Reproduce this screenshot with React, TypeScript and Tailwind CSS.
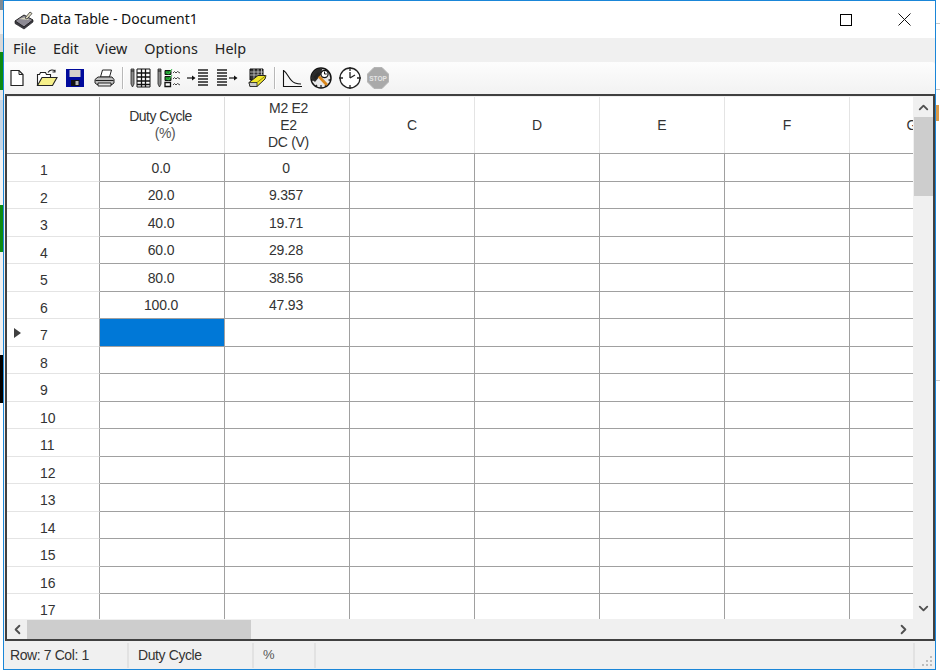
import { ChevronDown, ChevronLeft, ChevronRight, ChevronUp } from "lucide-react";

const COLS = ["C", "D", "E", "F", "G"];
const DATA = [
  ["0.0", "0"],
  ["20.0", "9.357"],
  ["40.0", "19.71"],
  ["60.0", "29.28"],
  ["80.0", "38.56"],
  ["100.0", "47.93"],
];
const ROWS = Array.from({ length: 17 }, (_, i) => i + 1);

const LEFT_STRIP = [
  ["h-[10px]", "bg-[#7f8a94]"],
  ["h-[24px]", "bg-[#f2f2f2]"],
  ["h-[18px]", "bg-[#d8d8d8]"],
  ["h-[38px]", "bg-[#0b8a12]"],
  ["h-[10px]", "bg-[#e8e8e8]"],
  ["h-[50px]", "bg-[#c6d6e6]"],
  ["h-[55px]", "bg-[#f4f4f4]"],
  ["h-[47px]", "bg-[#0b8a12]"],
  ["h-[103px]", "bg-[#f0f0f0]"],
  ["h-[48px]", "bg-[#000000]"],
  ["h-[268px]", "bg-[#ffffff]"],
];

function NewIcon() {
  return (
    <svg width="16" height="18" viewBox="0 0 16 18" className="shrink-0">
      <path d="M2 1.500h8l4 4v11H2z" fill="#fff" stroke="#222" strokeWidth="1.200" />
      <path d="M10 1.500v4h4" fill="none" stroke="#222" />
    </svg>
  );
}

function OpenIcon() {
  return (
    <svg width="22" height="18" viewBox="0 0 22 18" className="shrink-0">
      <path d="M1.500 16.500V5.500h2l1-2h5l1 2h4v3" fill="#fff" stroke="#222" strokeWidth="1.100" />
      <path d="M1.500 16.500l4.500-8h15l-4.500 8z" fill="#f6f08a" stroke="#222" strokeWidth="1.100" />
      <path d="M12 3.500c2-3 5-3 7-1.500M19 .8v2.200h-2.500" fill="none" stroke="#222" strokeWidth="1.100" />
    </svg>
  );
}

function SaveIcon() {
  return (
    <svg width="18" height="18" viewBox="0 0 18 18" className="shrink-0">
      <path d="M0 0h18v18H0z" fill="#000a9c" />
      <path d="M3.500 1h11v7h-11z" fill="#d6d2cc" />
      <path d="M5 11h8.500v6H5z" fill="#111" />
      <path d="M9.500 12h3v4h-3z" fill="#b5b5b5" />
    </svg>
  );
}

function PrintIcon() {
  return (
    <svg width="21" height="18" viewBox="0 0 21 18" className="shrink-0">
      <path d="M6.500 8 8.500 1h9l-2 7z" fill="#fff" stroke="#222" />
      <path d="M1 10.500 4 8h14l2 2.500v3.500l-2 1.500H3L1 14z" fill="#bdbdbd" stroke="#222" />
      <path d="M1.500 11.500h18" stroke="#222" />
      <path d="M4 14h13v3H4z" fill="#e4e4e4" stroke="#222" />
    </svg>
  );
}

function Sep() {
  return <div className="h-[22px] w-[2px] shrink-0 border-l border-[#b8b8b8] bg-white" />;
}

function PencilMark() {
  return (
    <>
      <path d="M1 1h3v15l-1.500 3L1 16z" fill="#8c8c8c" stroke="#222" strokeWidth=".8" />
      <path d="M1 3h3" stroke="#222" />
    </>
  );
}

function GridIcon() {
  return (
    <svg width="21" height="20" viewBox="0 0 21 20" className="shrink-0">
      <PencilMark />
      <path d="M7 1h13v18H7z" fill="#fff" stroke="#111" />
      <path d="M7 5h13M7 9h13M7 13h13M7 16.500h13M11.500 1v18M15.500 1v18" stroke="#111" strokeWidth="1.300" />
    </svg>
  );
}

function ChecklistIcon() {
  return (
    <svg width="24" height="20" viewBox="0 0 24 20" className="shrink-0">
      <PencilMark />
      <path d="M8 2.500h6v4H8z" fill="#1c8a2b" stroke="#111" />
      <path d="M8 8.500h6v4H8z" fill="#1c8a2b" stroke="#111" />
      <path d="M8 14.500h5.500v4H8z" fill="#fff" stroke="#111" strokeWidth="1.300" />
      <path d="M9.500 4.500l2 1.500 3.500-5M9.500 10.500l2 1.500 3.500-5" fill="none" stroke="#37c24b" />
      <path d="M16 5l1.500-1.500L19 5l1.500-1.500L23 5M16 11l1.500-1.500L19 11l1.500-1.500L23 11M16 17l1.500-1.500L19 17l1.500-1.500L23 17" fill="none" stroke="#444" />
    </svg>
  );
}

function ListInIcon() {
  return (
    <svg width="22" height="20" viewBox="0 0 22 20" className="shrink-0">
      <path d="M0 10h6" stroke="#111" strokeWidth="1.200" />
      <path d="M5 7.500 8.500 10 5 12.500z" fill="#111" />
      <path d="M11 2h10M11 5h10M11 8h10M11 11h10M11 14h10M11 17h10" stroke="#222" strokeWidth="1.700" />
    </svg>
  );
}

function ListOutIcon() {
  return (
    <svg width="22" height="20" viewBox="0 0 22 20" className="shrink-0">
      <path d="M1 2h10M1 5h10M1 8h10M1 11h10M1 14h10M1 17h10" stroke="#222" strokeWidth="1.700" />
      <path d="M13 10h6" stroke="#111" strokeWidth="1.200" />
      <path d="M18 7.500 21.500 10 18 12.500z" fill="#111" />
    </svg>
  );
}

function EraserIcon() {
  return (
    <svg width="19" height="20" viewBox="0 0 19 20" className="shrink-0">
      <path d="M2 1h13v11H2z" fill="#333" stroke="#111" />
      <path d="M2 4h13M2 7h13M6 1v11M10 1v9M13.500 1v6" stroke="#ddd" strokeWidth=".7" />
      <path d="M1 14.500 10 7.500h8l-1 3.500-8 7.500H2z" fill="#f3e92a" stroke="#222" />
      <path d="M1 14.500h8v4H2z" fill="#c9c9c9" stroke="#222" strokeWidth=".8" />
      <path d="M9 14.500 18 7.500" stroke="#8a7f10" />
    </svg>
  );
}

function CurveIcon() {
  return (
    <svg width="20" height="19" viewBox="0 0 20 19" className="shrink-0">
      <path d="M1.500 1v16.500H20" fill="none" stroke="#111" strokeWidth="1.100" />
      <path d="M1.500 1.500C6 4 7 12 13 14c2 .7 4 1 6 1" fill="none" stroke="#111" strokeWidth="1.100" />
    </svg>
  );
}

function ToolClockIcon() {
  return (
    <svg width="22" height="22" viewBox="0 0 22 22" className="shrink-0">
      <circle cx="11" cy="11" r="10" fill="#e8e8e8" stroke="#111" strokeWidth="1.500" />
      <path d="M1.500 12V9a9.500 9.500 0 0 1 11-7.500L10 9l-5 6z" fill="#2a2a2a" />
      <path d="M1.500 13h2M18.500 13h2M11 18v3M6 19l1-1M16 19l-1-1" stroke="#222" strokeWidth="1.300" />
      <path d="M8 8.500 17 18" stroke="#d9861c" strokeWidth="2.800" />
      <path d="M3.500 10 8 5l3 2.500-5.500 5z" fill="#222" />
      <circle cx="14.500" cy="7" r="3.600" fill="#fff" stroke="#111" strokeWidth="1.200" />
      <path d="M14.500 4.500V7h2.200" fill="none" stroke="#111" />
    </svg>
  );
}

function ClockIcon() {
  return (
    <svg width="22" height="22" viewBox="0 0 22 22" className="shrink-0">
      <circle cx="11" cy="11" r="10" fill="#fff" stroke="#222" strokeWidth="1.300" />
      <path d="M11 0v4M11 18v4M0 11h4M18 11h4M11 11V5M11 11l5-3" stroke="#222" strokeWidth="1.300" />
    </svg>
  );
}

function StopIcon() {
  return (
    <svg width="22" height="22" viewBox="0 0 22 22" className="shrink-0">
      <path d="M7 .5h8L21.500 7v8L15 21.500H7L.5 15V7z" fill="#a9a9a9" stroke="#b5b5b5" />
      <text x="11" y="13.500" textAnchor="middle" fontSize="6.500" fontWeight="700" fill="#e4e4e4" fontFamily="Liberation Sans, sans-serif">STOP</text>
    </svg>
  );
}

function AppIcon() {
  return (
    <svg width="20" height="20" viewBox="0 0 20 20" className="shrink-0">
      <path d="M1 11 10 5l9 5-9 7z" fill="#8d8a94" stroke="#222" />
      <path d="M1 11v2.500l9 5.500 9-7v-2l-9 7z" fill="#3c3a44" stroke="#222" strokeWidth=".7" />
      <path d="M5 9l7-2 3 3" fill="#d8d6c0" />
      <path d="M11 8 16 2l2 1.500-5 5.500z" fill="#e4dfc4" stroke="#333" strokeWidth=".8" />
    </svg>
  );
}

function TableGrid() {
  return (
    <div className="min-h-0 flex-1 overflow-hidden bg-white text-[14px] leading-[16px] text-[#333]">
      <div className="flex h-[57px] w-[1000px] border-b border-[#a0a0a0]">
        <div className="w-[93px] shrink-0 border-r border-[#a0a0a0]" />
        <div className="flex w-[125px] shrink-0 flex-col items-center border-r border-[#dcdcdc] pt-[11px] pr-[3px] leading-[17px] tracking-[-0.5px]">
          <span>Duty Cycle</span>
          <span className="pl-[9px] text-[#555]">(%)</span>
        </div>
        <div className="flex w-[125px] shrink-0 flex-col items-center border-r border-[#dcdcdc] pt-[3px] pl-[3px] leading-[17px] tracking-[-0.3px]">
          <span>M2 E2</span>
          <span>E2</span>
          <span>DC (V)</span>
        </div>
        {COLS.map((c) => (
          <div key={c} className="flex w-[125px] shrink-0 items-center justify-center border-r border-[#e4e4e4]">
            {c}
          </div>
        ))}
      </div>
      {ROWS.map((r, i) => (
        <div key={r} className="flex h-[27.5px] w-[1000px]">
          <div className="relative w-[93px] shrink-0 border-r border-b border-r-[#a0a0a0] border-b-[#e4e4e4] pt-[8px] pl-[33px] text-left">
            {r === 7 && (
              <span className="absolute left-[7px] top-[9px] h-0 w-0 border-y-[5.5px] border-l-[7px] border-y-transparent border-l-[#404040]" />
            )}
            {r}
          </div>
          <div className={`w-[125px] shrink-0 border-r border-b border-[#a0a0a0] pt-[5.5px] pr-[2px] text-center tracking-[-0.2px] ${r === 7 ? "bg-[#0078d7]" : ""}`}>
            {DATA[i]?.[0]}
          </div>
          <div className="w-[125px] shrink-0 border-r border-b border-[#a0a0a0] pt-[5.5px] pr-[2px] text-center tracking-[-0.2px]">
            {DATA[i]?.[1]}
          </div>
          {COLS.map((c) => (
            <div key={c} className="w-[125px] shrink-0 border-r border-b border-[#a0a0a0]" />
          ))}
        </div>
      ))}
    </div>
  );
}

export default function App() {
  return (
    <div className="flex h-[671px] w-[940px] overflow-hidden bg-white font-['Liberation_Sans',sans-serif]">
      <div className="flex w-[3px] shrink-0 flex-col">
        {LEFT_STRIP.map(([h, bg], i) => (
          <div key={i} className={`${h} ${bg}`} />
        ))}
      </div>

      <div className="flex h-[670px] w-[933px] shrink-0 flex-col border border-[#1a86d8] bg-[#f0f0f0]">
        <div className="flex h-[37px] shrink-0 items-center bg-white pl-[10px]">
          <AppIcon />
          <span className="ml-[6px] pb-[2px] font-['Noto_Sans',sans-serif] text-[14px] text-[#111]">Data Table - Document1</span>
          <div className="ml-auto flex h-full items-center">
            <div className="flex w-[60px] justify-center"><div className="h-[12px] w-[12px] border border-black" /></div>
            <div className="flex w-[59px] justify-center pr-[3px]">
              <svg width="13" height="13" viewBox="0 0 13 13"><path d="M.5.500l12 12M12.500.500l-12 12" stroke="#111" /></svg>
            </div>
          </div>
        </div>

        <div className="flex h-[24px] shrink-0 items-center gap-[17px] bg-[#f0f0f0] pb-[2px] pl-[9px] font-['Noto_Sans',sans-serif] text-[14.4px] text-[#222]">
          <span>File</span>
          <span>Edit</span>
          <span>View</span>
          <span>Options</span>
          <span>Help</span>
        </div>

        <div className="flex h-[32px] shrink-0 items-center rounded-tr-[3px] bg-gradient-to-b from-[#fdfdfd] to-[#f2f2f2] pl-[5px]">
          <NewIcon />
          <div className="ml-[11px]"><OpenIcon /></div>
          <div className="ml-[8px]"><SaveIcon /></div>
          <div className="ml-[10px]"><PrintIcon /></div>
          <div className="ml-[7px]"><Sep /></div>
          <div className="ml-[6px]"><GridIcon /></div>
          <div className="ml-[6px]"><ChecklistIcon /></div>
          <div className="ml-[6px]"><ListInIcon /></div>
          <div className="ml-[7px]"><ListOutIcon /></div>
          <div className="ml-[10px]"><EraserIcon /></div>
          <div className="ml-[7px]"><Sep /></div>
          <div className="ml-[6px]"><CurveIcon /></div>
          <div className="ml-[8px]"><ToolClockIcon /></div>
          <div className="ml-[7px]"><ClockIcon /></div>
          <div className="ml-[6px]"><StopIcon /></div>
        </div>

        <div className="ml-[1px] flex h-[547px] shrink-0 flex-col border-2 border-[#404040] bg-[#f0f0f0]">
          <div className="flex min-h-0 flex-1 pt-[1px]">
            <TableGrid />
            <div className="ml-[1px] flex w-[19px] shrink-0 flex-col items-center bg-[#f0f0f0]">
              <div className="flex h-[20px] w-full items-center justify-center"><ChevronUp size={15} strokeWidth={3} className="text-[#505050]" /></div>
              <div className="h-[79px] w-full bg-[#cdcdcd]" />
              <div className="flex-1" />
              <div className="flex h-[22px] w-full items-center justify-center"><ChevronDown size={15} strokeWidth={3} className="text-[#505050]" /></div>
            </div>
          </div>
          <div className="flex h-[20px] shrink-0 items-center bg-[#f0f0f0]">
            <div className="flex w-[20px] shrink-0 justify-center"><ChevronLeft size={15} strokeWidth={3} className="text-[#505050]" /></div>
            <div className="h-[19px] w-[224px] shrink-0 bg-[#cdcdcd]" />
            <div className="flex-1" />
            <div className="mr-[20px] flex w-[20px] shrink-0 justify-center"><ChevronRight size={15} strokeWidth={3} className="text-[#505050]" /></div>
          </div>
        </div>

        <div className="relative flex flex-1 items-center bg-[#f0f0f0] text-[14px] tracking-[-0.4px] text-[#333]">
          <div className="flex h-[25px] w-[125px] shrink-0 items-center border-r-2 border-[#e2e2e2] pl-[6px]">Row: 7 Col: 1</div>
          <div className="flex h-[25px] w-[125px] shrink-0 items-center border-r-2 border-[#e2e2e2] pl-[9px]">Duty Cycle</div>
          <div className="flex h-[25px] w-[62px] shrink-0 items-center border-r-2 border-[#e2e2e2] pl-[9px] text-[13px] text-[#555]">%</div>
          <div className="mr-[20px] h-[25px] flex-1 border-r-2 border-[#e2e2e2]" />
          <svg width="12" height="12" viewBox="0 0 12 12" className="absolute right-[2px] bottom-[2px]">
            <path d="M9 1h2v2H9zM5 5h2v2H5zM9 5h2v2H9zM1 9h2v2H1zM5 9h2v2H5zM9 9h2v2H9z" fill="#bdbdbd" />
          </svg>
        </div>
      </div>

      <div className="flex w-[4px] shrink-0 flex-col bg-white">
        <div className="h-[24px] border-b border-[#c8c8c8]" />
        <div className="h-[66px] border-b border-[#c8c8c8]" />
        <div className="mt-[15px] h-[16px] w-[3px] bg-[#d99a4a]" />
        <div className="h-[260px] border-b border-[#c8c8c8]" />
      </div>
    </div>
  );
}
